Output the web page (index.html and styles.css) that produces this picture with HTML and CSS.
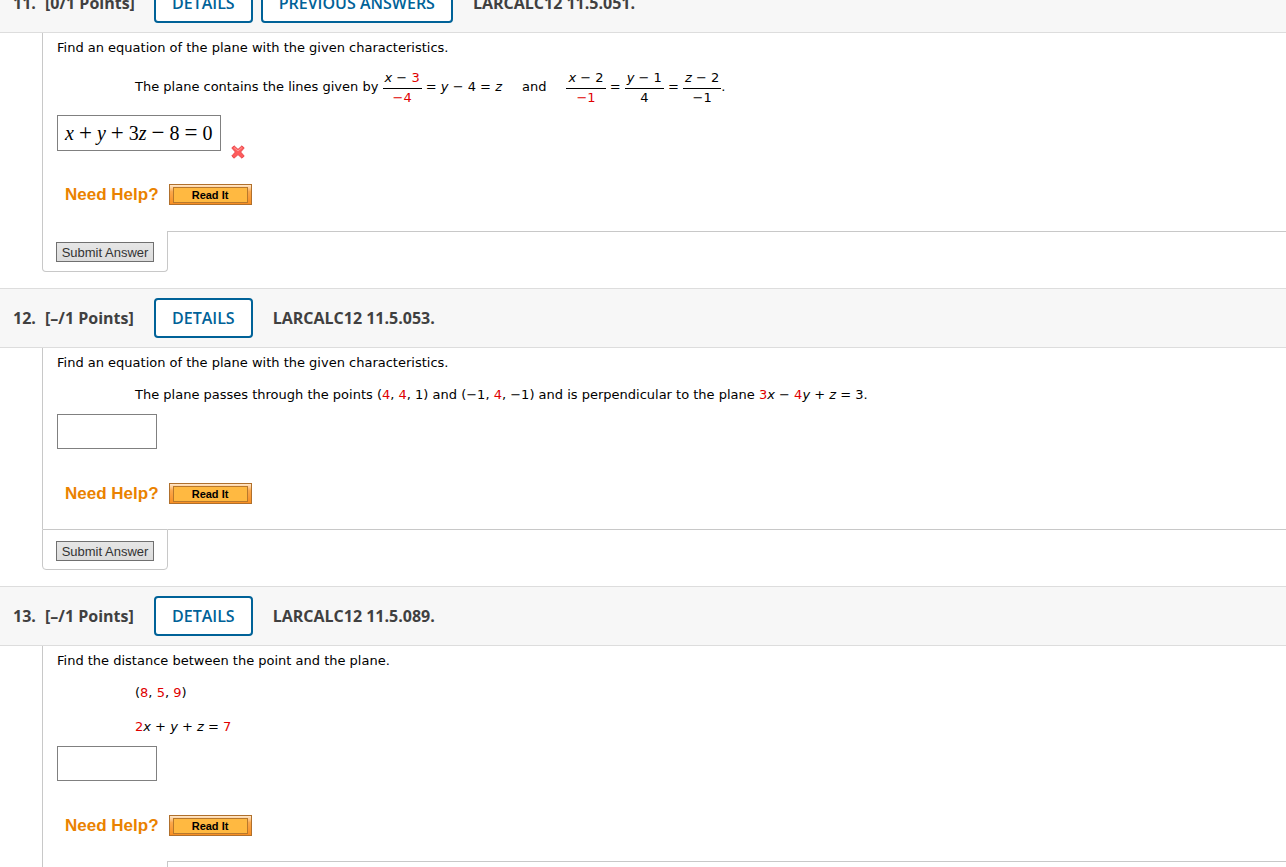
FILE: index.html
```
<!DOCTYPE html>
<html lang="en">
<head>
  <meta charset="utf-8">
  <title>Homework 11.5</title>
  <link rel="stylesheet" href="styles.css">
</head>
<body>
  <main class="assignment">

    <section class="question">
      <header class="question-bar">
        <span class="number">11.</span>
        <span class="points">[0/1 Points]</span>
        <div class="bar-buttons">
          <button type="button" class="bar-button">DETAILS</button>
          <button type="button" class="bar-button">PREVIOUS ANSWERS</button>
        </div>
        <span class="code">LARCALC12 11.5.051.</span>
      </header>
      <div class="question-body answered">
        <p>Find an equation of the plane with the given characteristics.</p>
        <p class="indent fractions">The plane contains the lines given by <span class="frac"><span class="top"><i>x</i> − <b>3</b></span><span class="bottom"><b>−4</b></span></span> = <i>y</i> − 4 = <i>z</i><span class="and">and</span><span class="frac"><span class="top"><i>x</i> − 2</span><span class="bottom"><b>−1</b></span></span> = <span class="frac"><span class="top"><i>y</i> − 1</span><span class="bottom">4</span></span> = <span class="frac"><span class="top"><i>z</i> − 2</span><span class="bottom">−1</span></span>.</p>
        <div class="answer-row">
          <div class="answer filled" role="textbox" tabindex="0" aria-label="Answer 11"><i>x</i><span class="op">+</span><i>y</i><span class="op">+</span>3<i>z</i><span class="op">−</span>8<span class="op">=</span>0</div>
          <svg class="wrong" width="14" height="14" viewBox="0 0 14 14" role="img" aria-label="Incorrect">
            <path d="M3 0.8 L7 4.4 L11 0.8 L13.2 3 L9.6 7 L13.2 11 L11 13.2 L7 9.6 L3 13.2 L0.8 11 L4.4 7 L0.8 3 Z" fill="#ff5c5c" stroke="#e8474b" stroke-linejoin="round"/>
            <path d="M3 2.5 L7 6 L11 2.5" fill="none" stroke="#ff9a96"/>
          </svg>
        </div>
        <div class="help">
          <span class="help-label">Need Help?</span>
          <button type="button" class="read-it"><span>Read It</span></button>
        </div>
      </div>
      <footer class="question-end">
        <div class="submit-box"><button type="button" class="submit">Submit Answer</button></div>
      </footer>
    </section>

    <section class="question">
      <header class="question-bar">
        <span class="number">12.</span>
        <span class="points">[–/1 Points]</span>
        <div class="bar-buttons">
          <button type="button" class="bar-button">DETAILS</button>
        </div>
        <span class="code">LARCALC12 11.5.053.</span>
      </header>
      <div class="question-body">
        <p>Find an equation of the plane with the given characteristics.</p>
        <p class="indent">The plane passes through the points (<b>4</b>, <b>4</b>, 1) and (−1, <b>4</b>, −1) and is perpendicular to the plane <b>3</b><i>x</i> − <b>4</b><i>y</i> + <i>z</i> = 3.</p>
        <div class="answer-row">
          <input type="text" class="answer" aria-label="Answer 12">
        </div>
        <div class="help">
          <span class="help-label">Need Help?</span>
          <button type="button" class="read-it"><span>Read It</span></button>
        </div>
      </div>
      <footer class="question-end">
        <div class="submit-box lined"><button type="button" class="submit">Submit Answer</button></div>
      </footer>
    </section>

    <section class="question">
      <header class="question-bar">
        <span class="number">13.</span>
        <span class="points">[–/1 Points]</span>
        <div class="bar-buttons">
          <button type="button" class="bar-button">DETAILS</button>
        </div>
        <span class="code">LARCALC12 11.5.089.</span>
      </header>
      <div class="question-body">
        <p>Find the distance between the point and the plane.</p>
        <div class="indent equations">
          <p>(<b>8</b>, <b>5</b>, <b>9</b>)</p>
          <p><b>2</b><i>x</i> + <i>y</i> + <i>z</i> = <b>7</b></p>
        </div>
        <div class="answer-row">
          <input type="text" class="answer" aria-label="Answer 13">
        </div>
        <div class="help">
          <span class="help-label">Need Help?</span>
          <button type="button" class="read-it"><span>Read It</span></button>
        </div>
      </div>
      <footer class="question-end">
        <div class="submit-box"></div>
      </footer>
    </section>

  </main>
</body>
</html>
```
FILE: styles.css
```
* {
  box-sizing: border-box;
}

body {
  margin: 0;
  height: 100vh;
  overflow: hidden;
  background-color: #ffffff;
  color: #000000;
  font-family: Verdana, "DejaVu Sans", sans-serif;
  font-size: 13px;
  line-height: 16px;
}

/* the list is scrolled part way into question 11 */
.assignment {
  margin-top: -27px;
}

.question {
  margin-bottom: 16px;
}

.question-bar {
  display: flex;
  align-items: center;
  padding: 9px 13px;
  background-color: #f7f7f7;
  border-top: 1px solid #dddddd;
  border-bottom: 1px solid #dddddd;
  color: #404040;
  font-family: "Open Sans", sans-serif;
  font-size: 16px;
  font-weight: bold;
  line-height: 22px;
}

.number {
  width: 32px;
}

.points {
  width: 109px;
}

.bar-buttons {
  display: flex;
  gap: 8px;
  margin-right: 20px;
}

.bar-button {
  height: 40px;
  padding: 0 16px;
  background-color: #ffffff;
  border: 2px solid #006298;
  border-radius: 4px;
  color: #006298;
  font: 600 16px "Open Sans", sans-serif;
  cursor: pointer;
}

.question-body {
  margin-left: 42px;
  padding: 7px 14px 25px;
  border-left: 1px solid #c8c8c8;
}

p {
  margin: 0;
}

b {
  color: #e00000;
  font-weight: normal;
}

.indent {
  margin-top: 16px;
  padding-left: 78px;
}

.equations {
  display: grid;
  gap: 18px;
}

.fractions {
  margin-top: 12px;
}

.frac {
  display: inline-block;
  vertical-align: middle;
  text-align: center;
}

.frac span {
  display: block;
  padding: 0 2px;
  line-height: 18px;
}

.frac .top {
  border-bottom: 1px solid #000000;
  line-height: 20px;
}

.and {
  margin: 0 20px;
}

.answer-row {
  display: flex;
  align-items: flex-start;
  margin-top: 11px;
}

.answer {
  width: 100px;
  height: 35px;
  padding: 0 7px;
  background-color: #ffffff;
  border: 1px solid #808080;
  font: 20px/34px "Liberation Serif", serif;
}

.filled {
  width: auto;
  height: 36px;
}

.op {
  margin: 0 5px;
  font-size: 23px;
}

.wrong {
  margin: 30px 0 0 10px;
}

.help {
  display: flex;
  align-items: center;
  gap: 10px;
  margin-top: 34px;
  padding-left: 8px;
}

/* the mark hangs below the answer box, so the gaps close up */
.answered {
  padding-bottom: 26px;
}

.answered .answer-row {
  margin-top: 8px;
}

.answered .help {
  margin-top: 25px;
}

.help-label {
  color: #ea8200;
  font: bold 17px/20px "Liberation Sans", Arial, sans-serif;
}

.read-it {
  width: 83px;
  height: 21px;
  padding: 2px 3px;
  background: linear-gradient(#ffe8cc, #fba84c 35%, #f98f22);
  border: 1px solid #b0702c;
  color: #000000;
  font: bold 11px/15px "Liberation Sans", Arial, sans-serif;
  cursor: pointer;
}

.read-it span {
  display: block;
  height: 16px;
  background-color: #ffb941;
  border: 1px solid #b8782c;
}

.question-end {
  display: flex;
  margin-left: 42px;
}

/* line that runs on to the right of the submit tab */
.question-end::after {
  content: "";
  flex: 1;
  border-top: 1px solid #c8c8c8;
}

.submit-box {
  width: 126px;
  height: 41px;
  padding: 11px 13px 9px;
  border: 1px solid #c8c8c8;
  border-top: none;
  border-radius: 0 0 4px 4px;
}

.submit-box.lined {
  border-top: 1px solid #c8c8c8;
}

.submit {
  display: block;
  width: 98px;
  height: 20px;
  padding: 0;
  background: linear-gradient(#e6e6e6, #dcdcdc);
  border: 1px solid #707070;
  color: #333333;
  font: 13px "Liberation Sans", Arial, sans-serif;
  cursor: pointer;
}
```
